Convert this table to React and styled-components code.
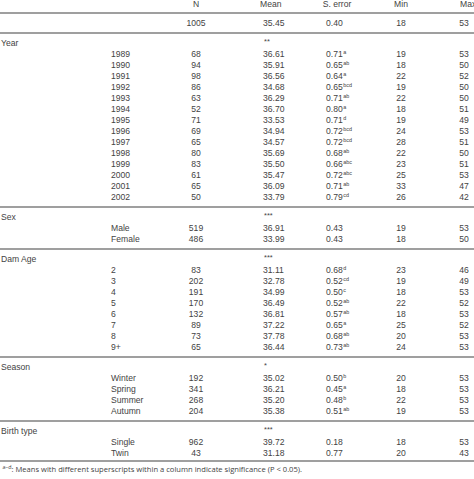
import styled, { createGlobalStyle } from 'styled-components';

const GlobalStyle = createGlobalStyle`
  html, body {
    margin: 0;
    padding: 0;
    background: #fff;
  }
  body {
    font-family: "Liberation Sans", Arial, sans-serif;
    color: #434343;
  }
`;

const Sheet = styled.div`
  width: 474px;
  height: 479px;
  overflow: hidden;
  font-size: 8.6px;
`;

const Row = styled.div`
  display: grid;
  grid-template-columns: 170px 52px 100px 30px 98px 28px;
  height: 11px;
  line-height: 11px;
  white-space: nowrap;
`;

const HeadRow = styled(Row)`
  height: 12px;
  line-height: 9px;
`;

const Section = styled.section`
  border-top: 2px solid #9f9f9f;
  padding: 4px 0 ${(p) => (p.$last ? 1 : 3)}px;
  ${(p) => p.$last && 'border-bottom: 2px solid #9f9f9f;'}
`;

const GroupName = styled.div`
  padding-left: 1px;
`;

const SubLabel = styled.div`
  padding-left: 111px;
`;

const Num = styled.div`
  text-align: center;
`;

const MeanVal = styled.div`
  padding-left: ${(p) => p.$pad ?? 41}px;
`;

const ErrVal = styled.div`
  padding-left: 4px;
`;

const HeadErr = styled.div`
  text-align: center;
`;

const HeadMax = styled.div`
  padding-left: 10px;
`;

const Sup = styled.sup`
  font-size: 5.4px;
  line-height: 1;
  vertical-align: top;
  position: relative;
  top: 1px;
  margin-left: 0.5px;
`;

const Stars = styled.span`
  font-size: 7.4px;
  position: relative;
  top: -2px;
  padding-left: 1px;
`;

const Footnote = styled.p`
  margin: 2px 0 0;
  padding-left: 2px;
  font-family: "Open Sans", "Liberation Sans", sans-serif;
  font-size: 7.6px;
  line-height: 10px;
  white-space: nowrap;
`;

const groups = [
  {
    name: 'Year',
    stars: '**',
    rows: [
      ['1989', 68, '36.61', '0.71', 'a', 19, 53],
      ['1990', 94, '35.91', '0.65', 'ab', 18, 50],
      ['1991', 98, '36.56', '0.64', 'a', 22, 52],
      ['1992', 86, '34.68', '0.65', 'bcd', 19, 50],
      ['1993', 63, '36.29', '0.71', 'ab', 22, 50],
      ['1994', 52, '36.70', '0.80', 'a', 18, 51],
      ['1995', 71, '33.53', '0.71', 'd', 19, 49],
      ['1996', 69, '34.94', '0.72', 'bcd', 24, 53],
      ['1997', 65, '34.57', '0.72', 'bcd', 28, 51],
      ['1998', 80, '35.69', '0.68', 'ab', 22, 50],
      ['1999', 83, '35.50', '0.66', 'abc', 23, 51],
      ['2000', 61, '35.47', '0.72', 'abc', 25, 53],
      ['2001', 65, '36.09', '0.71', 'ab', 33, 47],
      ['2002', 50, '33.79', '0.79', 'cd', 26, 42],
    ],
  },
  {
    name: 'Sex',
    stars: '***',
    rows: [
      ['Male', 519, '36.91', '0.43', '', 19, 53],
      ['Female', 486, '33.99', '0.43', '', 18, 50],
    ],
  },
  {
    name: 'Dam Age',
    stars: '***',
    rows: [
      ['2', 83, '31.11', '0.68', 'd', 23, 46],
      ['3', 202, '32.78', '0.52', 'cd', 19, 49],
      ['4', 191, '34.99', '0.50', 'c', 18, 53],
      ['5', 170, '36.49', '0.52', 'ab', 22, 52],
      ['6', 132, '36.81', '0.57', 'ab', 18, 53],
      ['7', 89, '37.22', '0.65', 'a', 25, 52],
      ['8', 73, '37.78', '0.68', 'ab', 20, 53],
      ['9+', 65, '36.44', '0.73', 'ab', 24, 53],
    ],
  },
  {
    name: 'Season',
    stars: '*',
    rows: [
      ['Winter', 192, '35.02', '0.50', 'b', 20, 53],
      ['Spring', 341, '36.21', '0.45', 'a', 18, 53],
      ['Summer', 268, '35.20', '0.48', 'b', 22, 53],
      ['Autumn', 204, '35.38', '0.51', 'ab', 19, 53],
    ],
  },
  {
    name: 'Birth type',
    stars: '***',
    rows: [
      ['Single', 962, '39.72', '0.18', '', 18, 53],
      ['Twin', 43, '31.18', '0.77', '', 20, 43],
    ],
  },
];

function DataRow({ row }) {
  const [label, n, mean, se, sup, min, max] = row;
  return (
    <Row>
      <SubLabel>{label}</SubLabel>
      <Num>{n}</Num>
      <MeanVal>{mean}</MeanVal>
      <ErrVal>
        {se}
        {sup && <Sup>{sup}</Sup>}
      </ErrVal>
      <Num>{min}</Num>
      <Num>{max}</Num>
    </Row>
  );
}

export default function App() {
  return (
    <Sheet>
      <GlobalStyle />
      <HeadRow>
        <div />
        <Num>N</Num>
        <MeanVal $pad={38}>Mean</MeanVal>
        <HeadErr>S. error</HeadErr>
        <Num>Min</Num>
        <HeadMax>Max</HeadMax>
      </HeadRow>

      <Section>
        <Row>
          <div />
          <Num>1005</Num>
          <MeanVal>35.45</MeanVal>
          <ErrVal>0.40</ErrVal>
          <Num>18</Num>
          <Num>53</Num>
        </Row>
      </Section>

      {groups.map((g, i) => (
        <Section key={g.name} $last={i === groups.length - 1}>
          <Row>
            <GroupName>{g.name}</GroupName>
            <div />
            <MeanVal>
              <Stars>{g.stars}</Stars>
            </MeanVal>
          </Row>
          {g.rows.map((r) => (
            <DataRow key={r[0]} row={r} />
          ))}
        </Section>
      ))}

      <Footnote>
        <Sup>a–d</Sup>: Means with different superscripts within a column indicate significance (P &lt; 0.05).
      </Footnote>
    </Sheet>
  );
}
